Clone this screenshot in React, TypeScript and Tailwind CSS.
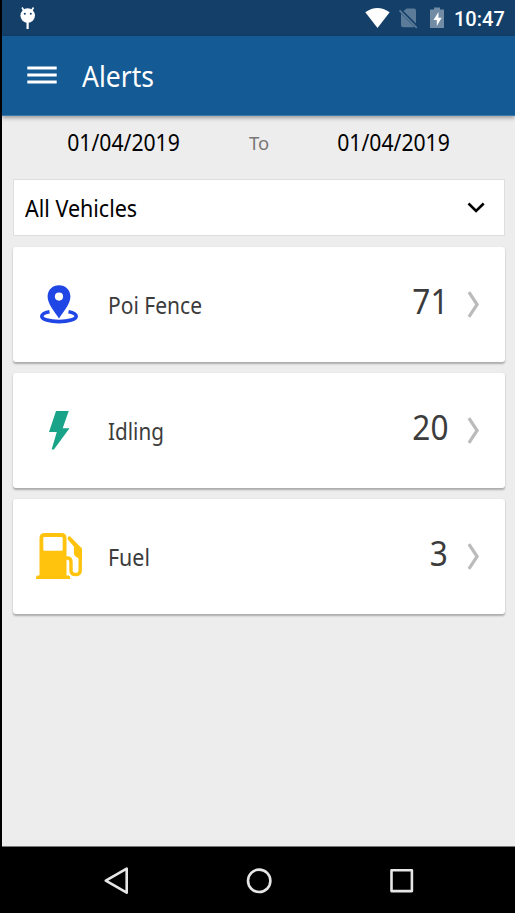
import type { ReactNode } from 'react';

const alerts = [
    { label: 'Poi Fence', count: 71, icon: <PoiIcon />, labelScale: 'scale-x-[0.895]' },
    { label: 'Idling', count: 20, icon: <BoltIcon />, labelScale: 'scale-x-[0.88]' },
    { label: 'Fuel', count: 3, icon: <FuelIcon />, labelScale: 'scale-x-[0.91]' },
];

function PoiIcon() {
    return (
        <svg width="50" height="50" viewBox="34 279 50 50" fill="none">
            <path
                d="M49.5 311.8c-4.5 .8-7.7 2.4-7.7 4.5 0 3 7.5 5.3 17.2 5.3s17.2-2.3 17.2-5.3c0-2.1-3.2-3.7-7.7-4.5"
                stroke="#2047e6"
                strokeWidth="3.6"
            />
            <path
                fillRule="evenodd"
                d="M59 285.3c-6.5 0-11.4 4.8-11.4 11.2 0 7.8 7.4 15.8 11.4 22 4-6.2 11.4-14.2 11.4-22 0-6.4-4.9-11.2-11.4-11.2zm0 7.2a4 4 0 1 1 0 8.2 4 4 0 0 1 0-8.2z"
                fill="#2047e6"
            />
        </svg>
    );
}

function BoltIcon() {
    return (
        <svg width="50" height="50" viewBox="34 405 50 50">
            <path d="M56 411h12.7l-6 17.3h6.8L53.9 449.5h-2.3L56.8 432H49z" fill="#19a388" />
        </svg>
    );
}

function FuelIcon() {
    return (
        <svg width="50" height="50" viewBox="34 531 50 50" fill="none">
            <path
                fillRule="evenodd"
                d="M45 533h16.5q5 0 5 5v37.5h2.3q1.5 0 1.5 3.5H36q0-3.5 1.5-3.5h2V538q0-5 5.5-5zm-.5 4q-1.2 0-1.2 1.3v11.2q0 1.3 1.2 1.3h17q1.2 0 1.2-1.3v-11.2q0-1.3-1.2-1.3z"
                fill="#ffc20d"
            />
            <path d="M66 558h1.2q3.8 0 3.8 4v8.2q0 4.3 4.6 4.3t4.6-4.3V551" stroke="#ffc20d" strokeWidth="3.4" />
            <path d="M70.2 536.5L82 548.5V560l-3.9-2c-2.2-1-4.2-2.5-4.2-5v-6.5L68.2 540q-1.5-2 0-3.3 1-.9 2-.2z" fill="#ffc20d" />
        </svg>
    );
}

function StatusBar() {
    return (
        <div className="flex h-9 shrink-0 items-center justify-between bg-[#133f68] pl-[17px] pr-[11px]">
            <svg width="18" height="36" viewBox="19 0 18 36">
                <path d="M22 7.5l2.5 4M33.5 7.5l-2.5 4" stroke="#fff" strokeWidth="1.6" />
                <path d="M27.6 22v7" stroke="#fff" strokeWidth="2.2" />
                <circle cx="27.7" cy="15.6" r="7.3" fill="#fff" />
                <circle cx="24.8" cy="13.8" r="1" fill="#133f68" />
                <circle cx="30.8" cy="13.8" r="1" fill="#133f68" />
            </svg>
            <div className="flex items-center">
                <svg width="90" height="36" viewBox="364 0 90 36">
                    <path d="M365.3 12.3q12-8.6 24.4 0L377.5 28z" fill="#fff" />
                    <path d="M406.7 8.5H414q2 0 2 2V23.5L403.5 11zM401 13.5l13.5 13.7H403q-2 0-2-2z" fill="#5b7b98" />
                    <path d="M399.5 10.3l17.3 17.5" stroke="#5b7b98" strokeWidth="1.8" />
                    <path d="M434 7.5h6v2h4V28h-14V9.5h4z" fill="#718ca4" />
                    <path d="M438.5 12l-5 8h3.3v6l4.9-8.3h-3.2z" fill="#fff" />
                </svg>
                <span className="inline-block w-[50px] whitespace-nowrap pt-px font-['Roboto',sans-serif] text-[20px] font-medium leading-9 text-white">
                    10:47
                </span>
            </div>
        </div>
    );
}

function AppBar() {
    return (
        <header className="z-10 flex h-20 shrink-0 items-center gap-[25px] border-b border-[#3f79a8] bg-[#145a94] pl-[25px] shadow-[0_2px_4px_rgba(0,0,0,0.35)]">
            <svg width="30" height="20" viewBox="27 66 30 20">
                <path d="M27.3 68h29.4M27.3 75h29.4M27.3 82h29.4" stroke="#fff" strokeWidth="3" />
            </svg>
            <h1 className="origin-left scale-x-[0.93] pt-[2px] text-[28.5px] leading-none text-white">Alerts</h1>
        </header>
    );
}

function DateRange() {
    return (
        <div className="flex h-[51px] items-center text-black">
            <div className="flex w-[243px] justify-center">
                <span className="scale-x-[0.9] pt-[2px] text-[23.5px] leading-none">01/04/2019</span>
            </div>
            <div className="flex w-[28px] justify-center">
                <span className="pt-[3px] text-[18.5px] leading-none text-[#777]">To</span>
            </div>
            <div className="flex w-[242px] justify-center">
                <span className="scale-x-[0.9] pt-[2px] text-[23.5px] leading-none">01/04/2019</span>
            </div>
        </div>
    );
}

function AlertCard({ label, count, icon, labelScale }: { label: string; count: number; icon: ReactNode; labelScale: string }) {
    return (
        <div className="flex h-[114.5px] items-center rounded-[3px] bg-white pl-[21px] pr-[24px] text-[#3c3c3c] shadow-[0_1.5px_2px_rgba(0,0,0,0.28)]">
            {icon}
            <span className={`ml-6 origin-left pt-[2px] text-[23.5px] leading-none ${labelScale}`}>{label}</span>
            <span className="ml-auto origin-right scale-x-[0.915] pb-[7px] text-[34.5px] leading-none">{count}</span>
            <svg className="ml-[19px]" width="14" height="28" viewBox="467 290 14 28" fill="none">
                <path d="M468.9 292.2l8.2 12.3-8.2 12.3" stroke="#bbb" strokeWidth="3.2" />
            </svg>
        </div>
    );
}

function NavBar() {
    return (
        <nav className="flex h-[67px] shrink-0 items-center justify-between border-t border-[#777] bg-black pl-[102px] pr-[100px] pt-px">
            <svg width="26" height="28" viewBox="104 867 26 28" fill="none" stroke="#e6e6e6" strokeWidth="2.6" strokeLinejoin="round">
                <path d="M105.8 880.7l20.9-12v24z" />
            </svg>
            <svg width="28" height="28" viewBox="245 867 28 28" fill="none" stroke="#e6e6e6" strokeWidth="2.6">
                <circle cx="258.2" cy="880.8" r="11.2" />
            </svg>
            <svg width="26" height="28" viewBox="389 867 26 28" fill="none" stroke="#e6e6e6" strokeWidth="2.6" strokeLinejoin="round">
                <path d="M391.5 870.3h20.4v20.8h-20.4z" />
            </svg>
        </nav>
    );
}

export default function App() {
    return (
        <div className="flex h-[913px] w-[515px] flex-col overflow-hidden border-l-2 border-black bg-[#ededed] font-['Noto_Sans',sans-serif]">
            <StatusBar />
            <AppBar />
            <main className="flex-1">
                <DateRange />
                <div className="ml-[11px] mr-[10px] mt-3 flex h-[57px] items-center justify-between border border-[#dedede] bg-white pl-[11px] pr-[18px]">
                    <span className="origin-left scale-x-[0.915] pt-[2px] text-[23.5px] leading-none text-black">All Vehicles</span>
                    <svg width="20" height="14" viewBox="466 201 20 14" fill="none">
                        <path d="M468.5 203.5l7.6 7.5 7.6-7.5" stroke="#000" strokeWidth="2.6" />
                    </svg>
                </div>
                <div className="ml-[11px] mr-[10px] mt-[11px] flex flex-col gap-[11.5px]">
                    {alerts.map((a) => (
                        <AlertCard key={a.label} {...a} />
                    ))}
                </div>
            </main>
            <NavBar />
        </div>
    );
}
